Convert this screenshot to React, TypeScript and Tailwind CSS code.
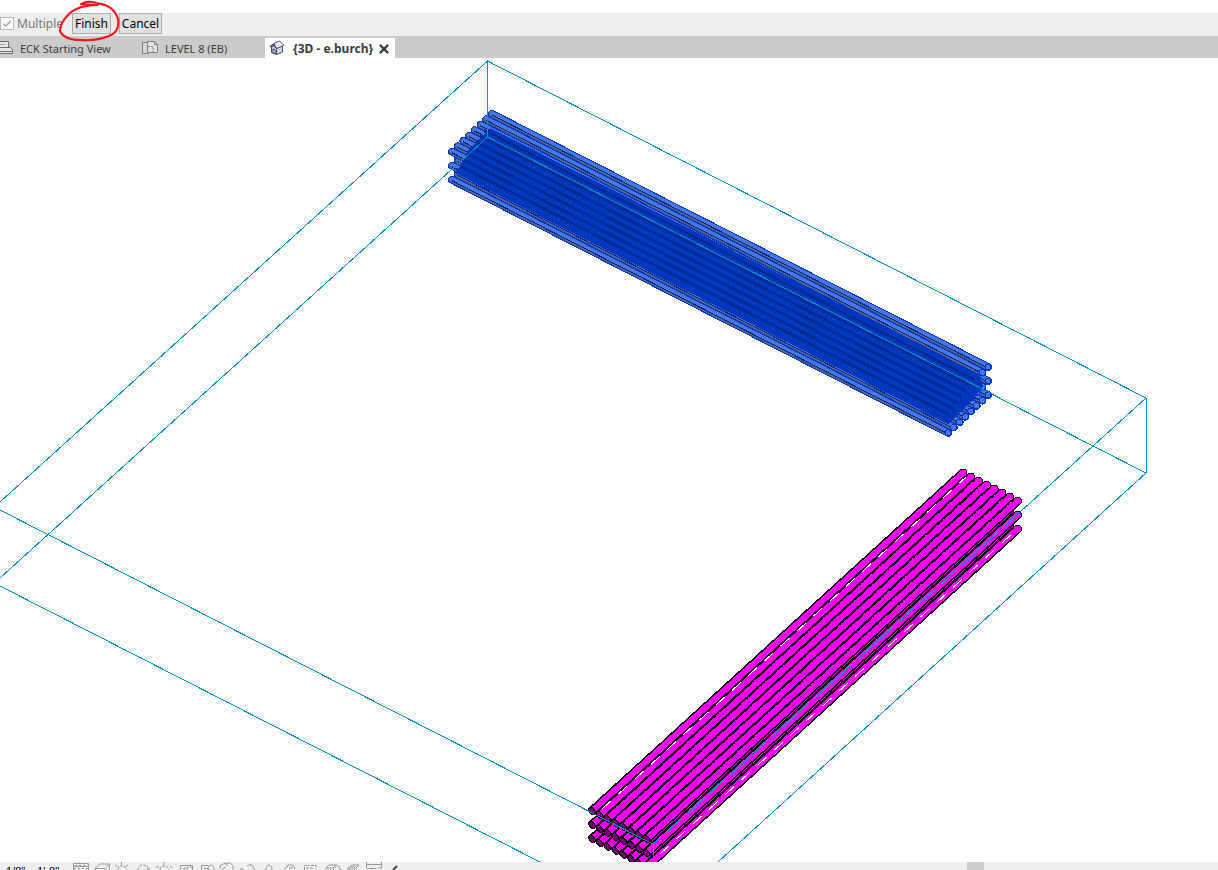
import type { ReactNode } from 'react';
import { Check, X } from 'lucide-react';

const COLS = [0, 1, 2, 3, 4, 5, 6, 7];
const ROWS = [2, 1, 0];

function SheetIcon() {
  return (
    <svg width="14" height="16" viewBox="0 0 14 16" fill="none" stroke="#6b6e73" className="shrink-0">
      <path d="M0 1.5h8.5v6H0M0 7.5h10.5l2 2v4H0M0 11.5h12" fill="#e4e6e8" />
      <path d="M0 4.5h6" stroke="#aaa" />
    </svg>
  );
}

function PlanIcon() {
  return (
    <svg width="17" height="16" viewBox="0 0 17 16" fill="none" stroke="#7c7f83" className="shrink-0">
      <path d="M.5 2.500h6v11h-6z" fill="#d8d8d8" />
      <path d="M5.500 4.500v-3h7l3 3v8h-10z" fill="#e2e2e2" />
      <path d="M12.500 1.500v3h3" />
      <path d="M6 6.500h5v6" strokeDasharray="2 1" />
    </svg>
  );
}

function HouseIcon() {
  return (
    <svg width="16" height="16" viewBox="0 0 16 16" stroke="#444c59" strokeLinejoin="round" className="shrink-0">
      <path d="M2.500 6v6.500l5 2V8l-2.500-4z" fill="#b4c5dc" />
      <path d="M7.500 8v6.500l6-2.500V6z" fill="#cdd9e8" />
      <path d="M5 3.500 10.500 1l4.500 4.500-7.500 3z" fill="#f4f5f7" />
      <path d="M5 3.500.800 6.500l1.700.500 2.500-1.500 2.500 3" fill="none" />
      <path d="M4 9v4l2 .8V10z" fill="#fff" />
    </svg>
  );
}

interface ViewTabProps {
  icon: ReactNode;
  label: string;
  className: string;
}

function ViewTab({ icon, label, className }: ViewTabProps) {
  return (
    <button type="button" className={`flex h-5 items-center whitespace-nowrap text-left text-[#3c3c3c] ${className}`}>
      {icon}
      <span className="pt-0.5">{label}</span>
    </button>
  );
}

function BluePipes() {
  return (
    <g shapeRendering="crispEdges">
      {ROWS.map((row) =>
        COLS.map((col) => {
          const x1 = 492 - col * 5.7;
          const y1 = 114 + col * 5.4 + row * 14;
          const x2 = x1 + 496;
          const y2 = y1 + 253;
          return (
            <g key={`${row}-${col}`} strokeLinecap="round">
              <path d={`M${x1} ${y1}L${x2} ${y2}`} stroke="#0034c8" strokeWidth="8" />
              <path d={`M${x1} ${y1}L${x2} ${y2}`} stroke="#55648f" strokeWidth="6" />
              <path d={`M${x1} ${y1 - 1}L${x2} ${y2 - 1}`} stroke="#4678e6" strokeWidth="4" />
              <path d={`M${x1} ${y1 + 1}L${x2} ${y2 + 1}`} stroke="#00257c" strokeWidth="1" />
              <circle cx={x2} cy={y2} r="3" fill="#4678e6" stroke="#0034c8" />
            </g>
          );
        })
      )}
      <path d="M490 128L979 375L983 386L973 399L948 424L455 173L462 163L468 150Z" fill="#0037bd" />
      {[0, 1, 2, 3, 4, 5, 6].map((i) => {
        const x1 = 484 - i * 4;
        const y1 = 130 + i * 6;
        return (
          <g key={i}>
            <path d={`M${x1} ${y1}l490 249`} stroke="#002a90" strokeWidth="2" />
            <path d={`M${x1} ${y1 + 2}l490 249`} stroke="#002f9f" strokeWidth="1" strokeDasharray="2 2" />
            <path d={`M${x1} ${y1 + 4}l490 249`} stroke="#0845cc" strokeWidth="1" strokeDasharray="2 3" />
          </g>
        );
      })}
    </g>
  );
}

function PinkPipes() {
  return (
    <g shapeRendering="crispEdges">
      {ROWS.map((row) =>
        COLS.map((col) => {
          const x1 = 592 + col * 7.8;
          const y1 = 811 + col * 4 + row * 14;
          const x2 = x1 + 371;
          const y2 = y1 - 338;
          const line = `M${x1} ${y1}L${x2} ${y2}`;
          return (
            <g key={`${row}-${col}`}>
              <path d={line} stroke="#000" strokeWidth="9" />
              <circle cx={x2} cy={y2} r="4" fill="#ff00ff" stroke="#000" />
              <path d={line} stroke="#ff00ff" strokeWidth="6" />
              <ellipse
                cx={x1}
                cy={y1}
                rx="2.5"
                ry="4"
                transform={`rotate(-42 ${x1} ${y1})`}
                fill="#6a0070"
                stroke="#000"
              />
            </g>
          );
        })
      )}
      {/* hairline gaps between neighbouring pipes in the top layer */}
      {[0, 1, 2, 3, 4, 5, 6].map((col) => (
        <path
          key={col}
          d={`M${602 + col * 7.8} ${809 + col * 4}l364 -332`}
          stroke={col === 0 ? '#fff' : '#ff00ff'}
          strokeWidth="1"
          strokeDasharray={col === 0 ? '12 10' : '2 2 2 2 2 14'}
        />
      ))}
      <path d="M660 854L1014 532" stroke="#fff" strokeDasharray="12 10" />
    </g>
  );
}

function ModelView() {
  return (
    <svg
      viewBox="0 58 1218 804"
      preserveAspectRatio="xMinYMin slice"
      className="block h-full w-full"
      fill="none"
      role="img"
      aria-label="3D model view"
    >
      <g stroke="#0090c4" shapeRendering="crispEdges">
        <path d="M0 502L487.500 61L1146 398V473L718 862" />
        <path d="M0 578L487.500 137L1146 473" />
        <path d="M487.500 61V137" />
        <path d="M0 510L653 844L1146 398" />
        <path d="M0 586L540 862" />
      </g>
      <BluePipes />
      <PinkPipes />
      <g stroke="#0090c4" shapeRendering="crispEdges">
        <path d="M487.500 100V137L1000 398" />
        <path d="M448 173L487.500 137" />
        <path d="M588 811L653 844V862" />
        <path d="M653 844L1022 510" />
        <path d="M690 811L1010 521" stroke="#7a55e0" strokeWidth="3" strokeDasharray="20 42" />
      </g>
    </svg>
  );
}

// only the upper part of each glyph shows above the window edge
function ViewControls() {
  return (
    <svg width="330" height="8" viewBox="72 862 330 8" fill="none" stroke="#999" className="shrink-0">
      <path d="M73.500 870v-6.500h15v6.500M74 866.500h14" />
      <path d="M75 865.500h12M74 868.500h14" strokeDasharray="2 2" />
      <path d="M95.500 870v-2l4-4h10v5l-2 2M96 868.500h9l4-4M105.500 869v2" />
      <path d="M118 870q0-4 4-4t4 4M121.500 862v3M115 865l3 2M128 865l-3 2" strokeDasharray="3 1" />
      <path d="M138 870q0-5 5-5t5 5M147 869h4" strokeDasharray="3 1" />
      <path d="M160 870q0-4 4-4t5 4M156 867h4M164 862v3M170 866l3 3" strokeDasharray="3 1" />
      <path d="M180.500 870v-4.500h12v4.500M184 870v-2h5M187 866q3-2 5 2" />
      <path d="M201.500 870v-4.500h7M204 868.500h4M208 870q0-5 3-5t3 5" />
      <path d="M220 869v-3l5-3 3 3M225 864q5-3 8 2v4M222 869l4-2" />
      <path d="M240 869h4M247 866q5-3 6 1l2 3" />
      <path d="M266 870q0-5 3-5t3 5" />
      <path d="M284 869l3-2q0-3 4-2t4 4M289 868h4" />
      <path d="M304.500 870v-4.500h5M311 865.500h5v5M306 868h8" strokeDasharray="3 1" />
      <path d="M325 869l4-4h8l3 3v2M326 868h7l3-3M333 870l3-3" />
      <path d="M347 869l5-4h7l-4 4zM350 867h6" />
      <path d="M366.500 862v6M381.500 862v6M367 864.500h14M367 868.500h9v2M378 868h4" />
      <path d="M393 870l4-4" stroke="#444" strokeWidth="2" />
    </svg>
  );
}

export default function App() {
  return (
    <div className="flex h-screen flex-col overflow-hidden bg-white font-['Noto_Sans','Open_Sans',sans-serif] text-xs">
      <header className="shrink-0 pt-[13px]">
        <div className="flex h-[23px] items-start bg-[#eeeeee]">
          <label className="flex h-[21px] w-[72px] items-center gap-[3px] whitespace-nowrap text-[#777]">
            <span className="relative flex h-[13px] w-[14px] shrink-0">
              <input
                type="checkbox"
                defaultChecked
                disabled
                className="h-[13px] w-[14px] appearance-none border border-[#bcbcbc] bg-white"
              />
              <Check className="absolute top-0.5 left-0.5 size-2.5 text-[#999]" strokeWidth={3} />
            </span>
            Multiple
          </label>
          <div className="relative">
            <button
              type="button"
              className="h-[21px] w-[39px] border border-[#adadad] bg-[#e1e1e1] leading-5 text-black"
            >
              Finish
            </button>
            <svg
              width="64"
              height="42"
              viewBox="58 0 64 42"
              fill="none"
              stroke="#f81018"
              strokeWidth="2"
              strokeLinecap="round"
              className="pointer-events-none absolute -top-[13px] -left-[14px]"
            >
              <path d="M81 4q7-4 15-1q18 2 22 16q2 13-9 17q-12 5-28 4q-17 0-21-9q0-8 9-17q9-9 29-9M81 4l13 1" />
            </svg>
          </div>
          <button
            type="button"
            className="ml-2 h-[21px] w-[43px] border border-[#adadad] bg-[#e1e1e1] leading-5 text-black"
          >
            Cancel
          </button>
        </div>
        <nav className="flex h-[22px] items-end bg-[#cbcbcb]">
          <ViewTab icon={<SheetIcon />} label="ECK Starting View" className="w-[142px] gap-1.5 text-[11px]" />
          <ViewTab icon={<PlanIcon />} label="LEVEL 8 (EB)" className="w-[123px] gap-1.5 text-[11px]" />
          <div className="flex h-5 w-[130px] items-center justify-between bg-white pr-1 pl-1">
            <ViewTab icon={<HouseIcon />} label="{3D - e.burch}" className="gap-2 font-bold" />
            <button type="button" aria-label="Close view" className="pt-0.5 text-[#333]">
              <X className="size-3.5" strokeWidth={4} />
            </button>
          </div>
        </nav>
      </header>
      <main className="min-h-0 flex-1">
        <ModelView />
      </main>
      <footer className="flex h-2 shrink-0 items-start overflow-hidden bg-[#efefef] text-black">
        <div className="flex w-[72px] shrink-0 gap-3 pl-1.5 font-['Liberation_Sans',sans-serif] text-[11px] leading-[18px] whitespace-nowrap">
          <span>1/8"</span>
          <span>1'-0"</span>
        </div>
        <ViewControls />
        <div className="h-2 flex-1 pl-[565px]">
          <div className="h-2 w-[17px] bg-[#cdcdcd]" />
        </div>
      </footer>
    </div>
  );
}
